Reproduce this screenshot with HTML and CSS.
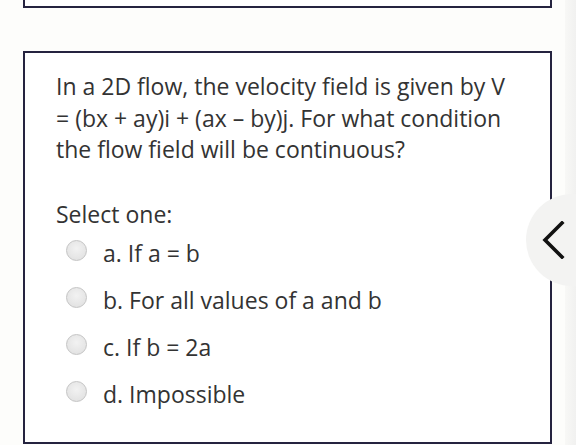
FILE: index.html
```html
<!DOCTYPE html>
<html>
<head>
<meta charset="utf-8">
<link rel="stylesheet" href="styles.css">
</head>
<body>
<div class="page">
  <div class="box prev"></div>
  <div class="box question">
    <p class="qtext">In a 2D flow, the velocity field is given by V = (bx + ay)i + (ax – by)j. For what condition the flow field will be continuous?</p>
    <div class="prompt">Select one:</div>
    <div class="answers">
      <label class="opt"><span class="radio"></span><span class="label">a. If a = b</span></label>
      <label class="opt"><span class="radio"></span><span class="label">b. For all values of a and b</span></label>
      <label class="opt"><span class="radio"></span><span class="label">c. If b = 2a</span></label>
      <label class="opt"><span class="radio"></span><span class="label">d. Impossible</span></label>
    </div>
  </div>
</div>
<div class="edge"></div>
<div class="back">
  <svg width="24" height="38" viewBox="0 0 24 38"><polyline points="21,2 4,19 21,36" fill="none" stroke="#111" stroke-width="3.6" stroke-linecap="square"/></svg>
</div>
</body>
</html>
```
FILE: styles.css
```css
html, body {
  margin: 0;
  padding: 0;
  background: #fdfdfb;
  height: 445px;
  overflow: hidden;
  font-family: "Open Sans", "Noto Sans", sans-serif;
  color: #333;
}
.page {
  display: flex;
  flex-direction: column;
  gap: 43px;
  padding-left: 23px;
  width: 529px;
  margin-top: -100px;
}
.box {
  border: 2px solid #25233f;
  background: #fff;
}
.prev {
  height: 104px;
}
.question {
  padding: 18px 30px 0 31px;
  height: 371px;
}
.qtext {
  margin: 0;
  font-size: 23px;
  line-height: 31.5px;
}
.prompt {
  font-size: 23px;
  line-height: 31.5px;
  margin-top: 33px;
}
.answers {
  display: flex;
  flex-direction: column;
  gap: 15px;
  margin-top: 7px;
}
.opt {
  display: flex;
  align-items: center;
  font-size: 23px;
  line-height: 32px;
  padding-left: 10px;
}
.radio {
  width: 19px;
  height: 19px;
  border-radius: 50%;
  border: 1px solid #c4c4c4;
  background: radial-gradient(circle at 50% 40%, #f2f2f2 0%, #e4e4e4 70%, #d8d8d8 100%);
  margin-right: 16px;
  margin-top: -6px;
}
.edge {
  position: absolute;
  top: 0;
  right: 0;
  width: 11px;
  height: 445px;
  background: linear-gradient(to right, #f8f8f6, #f1f1f0);
}
.back {
  position: absolute;
  left: 526px;
  top: 194px;
  width: 50px;
  height: 92px;
  border-radius: 46px 0 0 46px;
  background: #f3f3f2;
  display: flex;
  align-items: center;
  padding-left: 15px;
  box-sizing: border-box;
}
```
